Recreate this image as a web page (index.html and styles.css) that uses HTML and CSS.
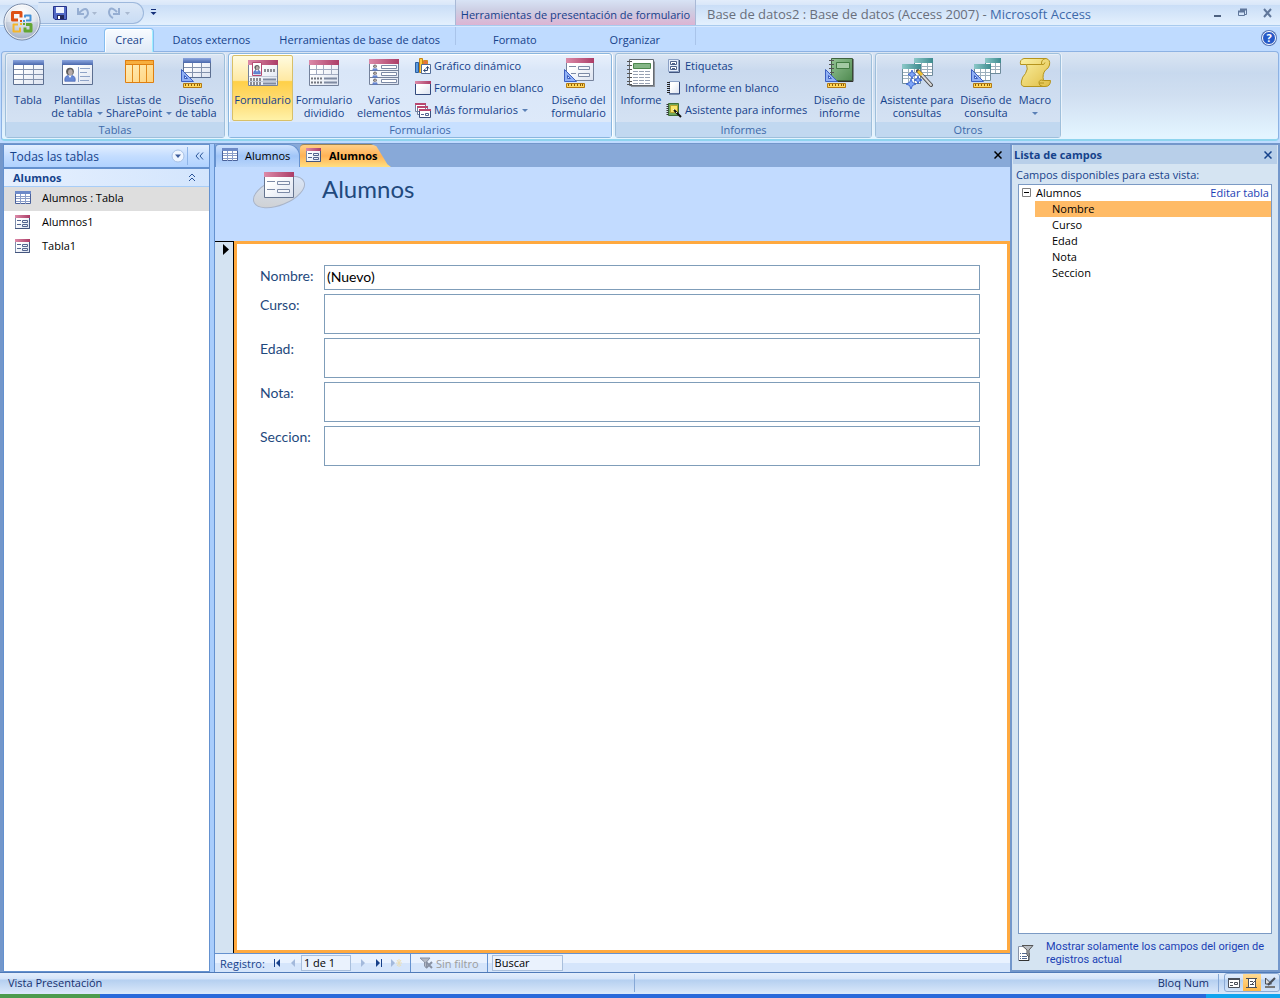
FILE: index.html
```html
<!DOCTYPE html>
<html lang="es">
<head>
    <meta charset="UTF-8">
    <meta name="viewport" content="width=device-width, initial-scale=1.0">
    <title>Base de datos2 - Microsoft Access</title>
    <link rel="stylesheet" href="styles.css">
</head>
<body>
    <!-- Shared icons -->
    <svg class="sprite" width="0" height="0" aria-hidden="true">
        <defs>
            <linearGradient id="gBlue" x1="0" y1="0" x2="0" y2="1"><stop offset="0" stop-color="#8ba6df"/><stop offset="1" stop-color="#4b68ac"/></linearGradient>
            <linearGradient id="gPaper" x1="0" y1="0" x2="1" y2="1"><stop offset="0.3" stop-color="#fff"/><stop offset="1" stop-color="#dbe2f0"/></linearGradient>
            <linearGradient id="gPink" x1="0" y1="0" x2="1" y2="0"><stop offset="0" stop-color="#dc8aa8"/><stop offset="1" stop-color="#ac3d67"/></linearGradient>
            <linearGradient id="gTeal" x1="0" y1="0" x2="1" y2="0"><stop offset="0" stop-color="#8cc8c8"/><stop offset="1" stop-color="#3d8b8f"/></linearGradient>
            <linearGradient id="gGreen" x1="0" y1="0" x2="1" y2="1"><stop offset="0" stop-color="#93c293"/><stop offset="1" stop-color="#4f8a50"/></linearGradient>
            <linearGradient id="gScroll" x1="0" y1="0" x2="1" y2="1"><stop offset="0" stop-color="#fbf2a4"/><stop offset="1" stop-color="#e0bd45"/></linearGradient>
            <linearGradient id="gList" x1="0" y1="0" x2="1" y2="1"><stop offset="0" stop-color="#fff0c0"/><stop offset="1" stop-color="#ffd27a"/></linearGradient>
            <radialGradient id="gOrb" cx="0.5" cy="0.25" r="0.8"><stop offset="0" stop-color="#fff"/><stop offset="0.5" stop-color="#e3e7ee"/><stop offset="1" stop-color="#93a3bd"/></radialGradient>
            <linearGradient id="gOval" x1="0" y1="1" x2="1" y2="0"><stop offset="0" stop-color="#cdcdcd"/><stop offset="1" stop-color="#dceaff"/></linearGradient>
        </defs>
        <symbol id="ruler" viewBox="0 0 32 32">
            <path d="M1.500 12.500V24.500H13.500Z" fill="#8fb0f4" stroke="#3d5fc0"/>
            <path d="M4.500 18.500V21.500H7.500Z" fill="#e6eeff" stroke="#3d5fc0"/>
            <path d="M3.500 26.500H21.500V30.500H3.500Z" fill="#ffd75c" stroke="#b37a12"/>
            <path d="M5.500 27v2M8.500 27v2M11.500 27v2M14.500 27v2M17.500 27v2M19.500 27v2" stroke="#8a5c08"/>
        </symbol>
        <symbol id="person" viewBox="0 0 14 18">
            <path d="M1 17q-1-6 4-7h4q5 1 4 7Z" fill="#6688d5" stroke="#3e5aa8" stroke-width="0.700"/>
            <path d="M5 10l2 3 2-3Z" fill="#fff"/>
            <circle cx="7" cy="5.500" r="4.500" fill="#5c5c5c"/>
            <ellipse cx="7.500" cy="6.500" rx="2.700" ry="3.500" fill="#b5aaa8"/>
        </symbol>
        <symbol id="table" viewBox="0 0 32 32">
            <path d="M1.500 3.500H31.500V27.500H1.500Z" fill="url(#gPaper)" stroke="#5c6f91"/>
            <path d="M1 3H32V8H1Z" fill="url(#gBlue)"/>
            <path d="M2 12.500H31M2 17.500H31M2 22.500H31M11.500 8V27M21.500 8V27" stroke="#8392ad"/>
        </symbol>
        <symbol id="template" viewBox="0 0 32 32">
            <path d="M1.500 3.500H31.500V27.500H1.500Z" fill="url(#gPaper)" stroke="#5c6f91"/>
            <path d="M1 3H32V8H1Z" fill="url(#gBlue)"/>
            <path d="M17.500 10V25M19 11.500H29M19 15.500H26M19 19.500H29M19 23.500H28" stroke="#8fa3c7"/>
            <use href="#person" x="3" y="9" width="12" height="17"/>
        </symbol>
        <symbol id="sharepoint" viewBox="0 0 32 32">
            <path d="M2.500 3.500H30.500V25.500H2.500Z" fill="url(#gList)" stroke="#df7f10"/>
            <path d="M2.500 3.500H30.500V7.500H2.500Z" fill="#f7ae3e" stroke="#df7f10"/>
            <path d="M9.500 8V25M16.500 8V25M23.500 8V25" stroke="#e08a1c"/>
        </symbol>
        <symbol id="tableDesign" viewBox="0 0 32 32">
            <path d="M3.500 1.500H30.500V20.500H3.500Z" fill="url(#gPaper)" stroke="#5c6f91"/>
            <path d="M3 1H31V6H3Z" fill="url(#gBlue)"/>
            <path d="M4 10.500H30M4 15.500H30M12.500 6V20M21.500 6V20" stroke="#8392ad"/>
            <use href="#ruler" width="32" height="32"/>
        </symbol>
        <symbol id="form" viewBox="0 0 32 32">
            <path d="M1.500 3.500H30.500V28.500H1.500Z" fill="url(#gPaper)" stroke="#75829b"/>
            <path d="M1 3H31V8H1Z" fill="url(#gPink)"/>
            <path d="M5.500 5.500H14.500V18.500H5.500Z" fill="#fff" stroke="#b54a72"/>
            <use href="#person" x="6" y="7" width="8" height="11"/>
            <path d="M17 13.500H28M3 22.500H14M3 26.500H14" stroke="#8b8d94" stroke-width="3" stroke-dasharray="2 1"/>
            <path d="M2 19.500H30M2 24.500H30" stroke="#c2cad8"/>
            <path d="M16 22.500H29M16 26.500H29" stroke="#7f8aa1" stroke-width="2"/>
        </symbol>
        <symbol id="split" viewBox="0 0 32 32">
            <path d="M1.500 3.500H30.500V28.500H1.500Z" fill="url(#gPaper)" stroke="#75829b"/>
            <path d="M1 3H31V8H1Z" fill="url(#gPink)"/>
            <path d="M2 12.500H30M2 17.500H30M8.500 8V17M15.500 8V17M23.500 8V17" stroke="#a2abc0"/>
            <path d="M3 21.500H14M3 25.500H14" stroke="#73767f" stroke-width="2" stroke-dasharray="2 1"/>
            <path d="M16 21.500H29M16 25.500H29" stroke="#7f8aa1" stroke-width="2"/>
        </symbol>
        <symbol id="multiple" viewBox="0 0 32 32">
            <path d="M1.500 2.500H30.500V27.500H1.500Z" fill="url(#gPaper)" stroke="#75829b"/>
            <path d="M1 2H31V7H1Z" fill="url(#gPink)"/>
            <path d="M2 13.500H30M2 20.500H30" stroke="#75829b"/>
            <path d="M13.500 8.500H28.500V11.500H13.500ZM13.500 15.500H28.500V18.500H13.500ZM13.500 22.500H28.500V25.500H13.500Z" fill="#fff" stroke="#7c8aa6"/>
            <use href="#person" x="4" y="7" width="6" height="7"/>
            <use href="#person" x="4" y="14" width="6" height="7"/>
            <use href="#person" x="4" y="21" width="6" height="7"/>
        </symbol>
        <symbol id="formPlain" viewBox="0 0 32 32">
            <path d="M1.500 3.500H30.500V28.500H1.500Z" fill="url(#gPaper)" stroke="#66758f"/>
            <path d="M1 3H31V8H1Z" fill="url(#gPink)"/>
            <path d="M14.500 12.500H26.500V15.500H14.500ZM14.500 20.500H26.500V23.500H14.500Z" fill="#f4f6fb" stroke="#7c8aa6"/>
            <path d="M4 12.500H12M4 20.500H12" stroke="#7c8aa6"/>
        </symbol>
        <symbol id="formDesign" viewBox="0 0 32 32">
            <path d="M3.500 1.500H30.500V23.500H3.500Z" fill="url(#gPaper)" stroke="#75829b"/>
            <path d="M3 1H31V6H3Z" fill="url(#gPink)"/>
            <path d="M15.500 9.500H26.500V12.500H15.500ZM15.500 16.500H26.500V19.500H15.500Z" fill="#f4f6fb" stroke="#7c8aa6"/>
            <path d="M6 9.500H13M8 16.500H13" stroke="#7c8aa6"/>
            <use href="#ruler" width="32" height="32"/>
        </symbol>
        <symbol id="report" viewBox="0 0 32 32">
            <path d="M6 4.500H30V30H6Z" fill="#8d9299"/>
            <path d="M4.500 2.500H28.500V28.500H4.500Z" fill="#fff" stroke="#646a73"/>
            <path d="M8.500 6.500H25.500V11.500H8.500Z" fill="#85b686" stroke="#4d874e"/>
            <path d="M8 14.500H26M8 17.500H26M8 20.500H26M8 23.500H26M8 26.500H26" stroke="#98a2b3" stroke-dasharray="5 1"/>
            <path d="M2 4.500H7M2 8.500H7M2 12.500H7M2 16.500H7M2 20.500H7M2 24.500H7M2 27.500H7" stroke="#555" stroke-width="1"/>
        </symbol>
        <symbol id="reportDesign" viewBox="0 0 32 32">
            <path d="M7.500 1.500H28.500V23.500H7.500Z" fill="url(#gGreen)" stroke="#40633f"/>
            <path d="M29 2V24.500H10" fill="none" stroke="#30302c"/>
            <path d="M12.500 5.500H25.500V11.500H12.500Z" fill="#a3c9a3" stroke="#417b42"/>
            <path d="M5 3.500H10M5 7.500H10M5 11.500H10M6 15.500H10" stroke="#555"/>
            <use href="#ruler" width="32" height="32"/>
        </symbol>
        <symbol id="queries" viewBox="0 0 32 32">
            <path d="M13.500 1.500H31.500V18.500H13.500Z" fill="#fff" stroke="#6e8b9b"/>
            <path d="M13 1H32V6H13Z" fill="url(#gTeal)"/>
            <path d="M14 9.500H31M14 12.500H31M14 15.500H31M20.500 6V18M26.500 6V18" stroke="#9db0bd"/>
            <path d="M1.500 7.500H19.500V26.500H1.500Z" fill="#fff" stroke="#6e8b9b"/>
            <path d="M1 7H20V12H1Z" fill="url(#gTeal)"/>
            <path d="M2 15.500H19M2 18.500H19M2 21.500H19M7.500 12V26M13.500 12V26" stroke="#9db0bd"/>
        </symbol>
        <symbol id="queryWizard" viewBox="0 0 32 32">
            <use href="#queries" width="32" height="32"/>
            <path d="M11 13l1.200 3L15 17.500l-2.800 1.500L11 22l-1.200-3L7 17.500l2.800-1.500ZM17 19l1 3 3 1-3 1-1 3-1-3-3-1 3-1ZM10 22l1.500 3.500L15 27l-3.500 1.500L10 32l-1.500-3.500L5 27l3.500-1.500Z" fill="#7fa6f7" stroke="#2b55c8" stroke-width="0.800"/>
            <path d="M17 14L30 28" stroke="#4c4c4c" stroke-width="4" stroke-linecap="round"/>
            <path d="M20 17L30 28" stroke="#d9d9d9" stroke-width="2" stroke-linecap="round"/>
            <path d="M17 14L21 18" stroke="#f2c230" stroke-width="3"/>
        </symbol>
        <symbol id="queryDesign" viewBox="0 0 32 32">
            <path d="M15.500 1.500H30.500V16.500H15.500Z" fill="#fff" stroke="#6e8b9b"/>
            <path d="M15 1H31V6H15Z" fill="url(#gTeal)"/>
            <path d="M16 9.500H30M16 12.500H30M20.500 6V16M25.500 6V16" stroke="#9db0bd"/>
            <path d="M4.500 7.500H20.500V23.500H4.500Z" fill="#fff" stroke="#6e8b9b"/>
            <path d="M4 7H21V12H4Z" fill="url(#gTeal)"/>
            <path d="M5 15.500H20M5 18.500H20M10.500 12V23M15.500 12V23" stroke="#9db0bd"/>
            <use href="#ruler" width="32" height="32"/>
        </symbol>
        <symbol id="macro" viewBox="0 0 32 32">
            <path d="M5 1.500H27Q31.500 2.500 30.500 8Q30 11 26.500 13Q23 17 24.500 23.500H31.500Q31.500 29.500 26 29.500H5Q1.500 29 2.500 24Q3 20 6.500 16.500Q9.500 12 7.500 7.500H1.500Q0.500 2.500 5 1.500Z" fill="url(#gScroll)" stroke="#b5941d"/>
            <path d="M7.500 7.500H22.500Q22 2 27 1.500M22.500 7.500Q25 8.500 26 5.500M24.500 23.500Q20 22 20 26Q20 29 24 29.500M20.500 26H25" fill="none" stroke="#b5941d"/>
        </symbol>
        <symbol id="pivot" viewBox="0 0 16 16">
            <path d="M0.500 4.500h3v10h-3Z" fill="#5a9ae0" stroke="#2b5e9f"/>
            <path d="M4.500 0.500h3v14h-3Z" fill="#ffcb3e" stroke="#c38414"/>
            <path d="M8.500 2.500h4v8h-4Z" fill="#e7703b" stroke="#d18a24"/>
            <path d="M6.500 6.500h9v9h-9Z" fill="#fff" stroke="#526c98"/>
            <path d="M9 12.500h3.500V9M11 10.500l1.500-2 1.500 2M10.500 11l-2 1.500 2 1.500" fill="none" stroke="#2d4675"/>
        </symbol>
        <symbol id="blank" viewBox="0 0 16 16">
            <path d="M0.500 1.500h15v13h-15Z" fill="url(#gPaper)" stroke="#324a7d"/>
            <path d="M0 1h16v3H0Z" fill="url(#gPink)"/>
        </symbol>
        <symbol id="moreForms" viewBox="0 0 16 16">
            <path d="M0.500 1.500h10v8h-10ZM2.500 4.500h10v8h-10Z" fill="#fff" stroke="#6f7f9f"/>
            <path d="M0 1h11v2H0ZM2 4h11v2H2Z" fill="#b9476f"/>
            <path d="M4.500 7.500h11v8h-11Z" fill="#fff" stroke="#3b4f7c"/>
            <path d="M4 7h12v2H4Z" fill="#b9476f"/>
            <path d="M6 12.500h3M10.500 11.500h3v2h-3Z" fill="none" stroke="#53658f"/>
        </symbol>
        <symbol id="labels" viewBox="0 0 16 16">
            <path d="M2.500 1.500h10v12h-10Z" fill="#e6eefb" stroke="#8ba0c4"/>
            <path d="M3 14.500h10.500V2" fill="none" stroke="#41557f"/>
            <path d="M4.500 3.500h6v3h-6ZM4.500 8.500h6v3h-6Z" fill="#fff" stroke="#4d6188"/>
            <path d="M6 5.500h3M6 10.500h3" stroke="#4d6188"/>
        </symbol>
        <symbol id="blankReport" viewBox="0 0 16 16">
            <path d="M3.500 1.500h10v12h-10Z" fill="url(#gPaper)" stroke="#8ba0c4"/>
            <path d="M3 14h10.500V2" fill="none" stroke="#2e4476"/>
            <path d="M2.500 2v12" stroke="#222" stroke-width="3" stroke-dasharray="1 1"/>
        </symbol>
        <symbol id="reportWizard" viewBox="0 0 16 16">
            <path d="M2.500 1.500h10v12h-10Z" fill="#6fa65a" stroke="#3f6e36"/>
            <path d="M4.500 3.500h7v7h-7Z" fill="#f9e66b" stroke="#b9a32a"/>
            <path d="M1.500 2v12" stroke="#333" stroke-width="2" stroke-dasharray="1 1"/>
            <path d="M8 8l7 7" stroke="#111" stroke-width="2"/>
            <path d="M7 7l1 1M10 10l1 1" stroke="#eee"/>
        </symbol>
        <symbol id="tableSm" viewBox="0 0 16 14">
            <path d="M0.500 0.500h15v12h-15Z" fill="#fff" stroke="#4a629b"/>
            <path d="M0 0h16v3H0Z" fill="#6d8ac8"/>
            <path d="M1 5.500h14M1 7.500h14M1 10.500h14M5.500 3v10M10.500 3v10" stroke="#8a9dc8"/>
        </symbol>
        <symbol id="formSm" viewBox="0 0 16 14">
            <path d="M0.500 0.500h14v13h-14Z" fill="url(#gPaper)" stroke="#7f8eac"/>
            <path d="M14.500 3v10.500H0" fill="none" stroke="#44567e"/>
            <path d="M0 0h15v3H0Z" fill="url(#gPink)"/>
            <path d="M2 5.500h4M2 9.500h4M7.500 5.500h5v2h-5ZM7.500 9.500h5v2h-5Z" fill="none" stroke="#53658f"/>
        </symbol>
    </svg>

    <div class="app">
        <header class="titlebar">
            <div class="quick-access">
                <button class="office" aria-label="Botón de Office">
                    <svg width="40" height="40" viewBox="0 0 40 40">
                        <circle cx="20" cy="20" r="18" fill="url(#gOrb)" stroke="#6f819f"/>
                        <path d="M3 20a17 17 0 0 0 34 0Z" fill="#a9b6cb" fill-opacity="0.300"/>
                        <circle cx="20" cy="20" r="17" fill="none" stroke="#fff" stroke-opacity="0.800"/>
                        <g fill="none" stroke-linejoin="round">
                            <path d="M16 18h-5.500V10.500h8.500v5" stroke="#dd4f14" stroke-width="3"/>
                            <path d="M24 18.500h4.500v-5h-5.500v2" stroke="#4592d8" stroke-width="2"/>
                            <path d="M16 22.500h-4.500v7h6.500v-4" stroke="#f5b62a" stroke-width="2"/>
                            <path d="M24 22.500h5v6.500h-6v-3.500" stroke="#63a632" stroke-width="3"/>
                        </g>
                        <path d="M18 18h2v2h-2Z" fill="#dd4f14"/>
                        <path d="M21 18h2v2h-2Z" fill="#4592d8"/>
                        <path d="M18 21h2v2h-2Z" fill="#f5b62a"/>
                        <path d="M21 21h2v2h-2Z" fill="#63a632"/>
                    </svg>
                </button>
                <div class="qat">
                    <button aria-label="Guardar"><svg width="14" height="14" viewBox="0 0 14 14"><path d="M0.500 0.500H13.500V13.500H2L0.500 12Z" fill="#5269c6" stroke="#27348a"/><path d="M3 1h8v6H3Z" fill="#eef3ff"/><path d="M4 9h7v4H4Z" fill="#23285a"/><path d="M5 10h2v3H5Z" fill="#fff"/></svg></button>
                    <button aria-label="Deshacer"><svg width="22" height="14" viewBox="0 0 22 14"><path d="M3 7q8-8 9 0 0 3-4 5M2 2v6h6" fill="none" stroke="#96aed2" stroke-width="2"/><path d="M16 6h5l-2.500 3Z" fill="#a9b9d0"/></svg></button>
                    <button aria-label="Rehacer"><svg width="24" height="14" viewBox="0 0 24 14"><path d="M10 6q-7-7-8 0 0 4 4 6M12 2v6H6" fill="none" stroke="#96aed2" stroke-width="2"/><path d="M18 6h5l-2.500 3Z" fill="#a9b9d0"/></svg></button>
                </div>
                <button class="qat-more" aria-label="Personalizar"><svg width="7" height="8" viewBox="0 0 7 8"><path d="M1 1.500h5" stroke="#15307a"/><path d="M0.500 4h6l-3 3Z" fill="#15307a"/></svg></button>
            </div>
            <div class="context-title">Herramientas de presentación de formulario</div>
            <h1 class="app-title">Base de datos2 : Base de datos (Access 2007) - <span>Microsoft Access</span></h1>
            <div class="window-buttons">
                <button aria-label="Minimizar"><svg width="10" height="10" viewBox="0 0 10 10"><path d="M1 8h7" stroke="#4d6180" stroke-width="2"/></svg></button>
                <button aria-label="Restaurar"><svg width="10" height="10" viewBox="0 0 10 10"><path d="M2.500 3V1.500h6v5H7M0.500 3.500h6v4h-6Z" fill="none" stroke="#60779b"/><path d="M0 3.500h7M2 1.500h7" stroke="#60779b" stroke-width="2"/></svg></button>
                <button aria-label="Cerrar"><svg width="10" height="10" viewBox="0 0 10 10"><path d="M1 1l7 8M8 1L1 9" stroke="#60779b" stroke-width="2"/></svg></button>
            </div>
        </header>

        <nav class="ribbon-tabs">
            <div class="main-tabs">
                <button class="tab">Inicio</button>
                <button class="tab active">Crear</button>
                <button class="tab">Datos externos</button>
                <button class="tab">Herramientas de base de datos</button>
            </div>
            <div class="context-tabs">
                <button class="tab">Formato</button>
                <button class="tab">Organizar</button>
            </div>
            <button class="help" aria-label="Ayuda">?</button>
        </nav>

        <section class="ribbon">
            <div class="group">
                <div class="group-body tables-body">
                    <button class="big"><svg><use href="#table"/></svg>Tabla</button>
                    <button class="big"><svg><use href="#template"/></svg>Plantillas<span class="more">de tabla</span></button>
                    <button class="big"><svg><use href="#sharepoint"/></svg>Listas de<span class="more">SharePoint</span></button>
                    <button class="big"><svg><use href="#tableDesign"/></svg>Diseño<br>de tabla</button>
                </div>
                <h2>Tablas</h2>
            </div>
            <div class="group hover">
                <div class="group-body forms-body">
                    <button class="big lit"><svg><use href="#form"/></svg>Formulario</button>
                    <button class="big"><svg><use href="#split"/></svg>Formulario<br>dividido</button>
                    <button class="big"><svg><use href="#multiple"/></svg>Varios<br>elementos</button>
                    <div class="small-list">
                        <button class="small"><svg><use href="#pivot"/></svg>Gráfico dinámico</button>
                        <button class="small"><svg><use href="#blank"/></svg>Formulario en blanco</button>
                        <button class="small"><svg><use href="#moreForms"/></svg><span class="more">Más formularios</span></button>
                    </div>
                    <button class="big"><svg><use href="#formDesign"/></svg>Diseño del<br>formulario</button>
                </div>
                <h2>Formularios</h2>
            </div>
            <div class="group">
                <div class="group-body reports-body">
                    <button class="big"><svg><use href="#report"/></svg>Informe</button>
                    <div class="small-list">
                        <button class="small"><svg><use href="#labels"/></svg>Etiquetas</button>
                        <button class="small"><svg><use href="#blankReport"/></svg>Informe en blanco</button>
                        <button class="small"><svg><use href="#reportWizard"/></svg>Asistente para informes</button>
                    </div>
                    <button class="big"><svg><use href="#reportDesign"/></svg>Diseño de<br>informe</button>
                </div>
                <h2>Informes</h2>
            </div>
            <div class="group">
                <div class="group-body other-body">
                    <button class="big"><svg><use href="#queryWizard"/></svg>Asistente para<br>consultas</button>
                    <button class="big"><svg><use href="#queryDesign"/></svg>Diseño de<br>consulta</button>
                    <button class="big"><svg><use href="#macro"/></svg>Macro<span class="more alone"></span></button>
                </div>
                <h2>Otros</h2>
            </div>
        </section>

        <main class="workspace">
            <aside class="nav-pane">
                <div class="nav-header">
                    <span>Todas las tablas</span>
                    <button class="nav-filter" aria-label="Elegir categoría"><svg width="14" height="14" viewBox="0 0 14 14"><circle cx="7" cy="7" r="6" fill="#eef5ff" stroke="#a9c2e6"/><path d="M4 5.500h6l-3 3.500Z" fill="#3c5c9c"/></svg></button>
                    <button class="nav-collapse" aria-label="Contraer"><svg width="9" height="8" viewBox="0 0 9 8"><path d="M4 0.500L1 4l3 3.500M8 0.500L5 4l3 3.500" fill="none" stroke="#2c5599"/></svg></button>
                </div>
                <button class="nav-group">Alumnos<svg width="8" height="9" viewBox="0 0 8 9"><path d="M1 4l3-3 3 3M1 8l3-3 3 3" fill="none" stroke="#2c5599"/></svg></button>
                <ul class="nav-list">
                    <li class="selected"><svg><use href="#tableSm"/></svg>Alumnos : Tabla</li>
                    <li><svg><use href="#formSm"/></svg>Alumnos1</li>
                    <li><svg><use href="#formSm"/></svg>Tabla1</li>
                </ul>
            </aside>

            <section class="document">
                <div class="doc-tabs">
                    <button class="doc-tab"><svg><use href="#tableSm"/></svg>Alumnos</button>
                    <button class="doc-tab current"><svg><use href="#formSm"/></svg>Alumnos</button>
                    <button class="doc-close" aria-label="Cerrar documento"><svg width="8" height="8" viewBox="0 0 8 8"><path d="M0.500 0.500l7 7M7.500 0.500l-7 7" stroke="#000" stroke-width="1.500"/></svg></button>
                </div>
                <div class="form-header">
                    <svg width="54" height="38" viewBox="0 0 54 38">
                        <ellipse cx="27" cy="21" rx="27" ry="13" transform="rotate(-22 27 21)" fill="url(#gOval)" stroke="#a9b4c8"/>
                        <use href="#formPlain" x="11" y="-2" width="32" height="32"/>
                    </svg>
                    <h2>Alumnos</h2>
                </div>
                <div class="form-body">
                    <div class="selector"><svg width="6" height="11" viewBox="0 0 6 11"><path d="M0 0l6 5.500L0 11Z"/></svg></div>
                    <form class="record">
                        <label for="nombre">Nombre:</label>
                        <input id="nombre" type="text" value="(Nuevo)">
                        <label for="curso">Curso:</label>
                        <textarea id="curso"></textarea>
                        <label for="edad">Edad:</label>
                        <textarea id="edad"></textarea>
                        <label for="nota">Nota:</label>
                        <textarea id="nota"></textarea>
                        <label for="seccion">Seccion:</label>
                        <textarea id="seccion"></textarea>
                    </form>
                </div>
                <div class="record-nav">
                    <label for="registro">Registro:</label>
                    <button aria-label="Primero"><svg width="8" height="8" viewBox="0 0 8 8"><path d="M1.500 0v8" stroke="#17408a"/><path d="M7 0v8L3 4Z" fill="#17408a"/></svg></button>
                    <button aria-label="Anterior"><svg width="8" height="8" viewBox="0 0 8 8"><path d="M6 0v8L2 4Z" fill="#a3b9dc"/></svg></button>
                    <input id="registro" type="text" value="1 de 1">
                    <button aria-label="Siguiente"><svg width="8" height="8" viewBox="0 0 8 8"><path d="M2 0v8l4-4Z" fill="#a3b9dc"/></svg></button>
                    <button aria-label="Último"><svg width="8" height="8" viewBox="0 0 8 8"><path d="M6.500 0v8" stroke="#17408a"/><path d="M1 0v8l4-4Z" fill="#17408a"/></svg></button>
                    <button aria-label="Nuevo"><svg width="11" height="8" viewBox="0 0 11 8"><path d="M0 0v8l4-4Z" fill="#a3b9dc"/><path d="M8 0v8M5 4h6M6 1l4 6M10 1L6 7" stroke="#eadfb8"/></svg></button>
                    <button class="filter" disabled><svg width="14" height="12" viewBox="0 0 14 12"><path d="M1 1h10L7.500 5v6l-2-2V5Z" fill="#b5bac5" stroke="#8790a2"/><path d="M7 5l6 6M13 5l-6 6" stroke="#8790a2" stroke-width="2"/></svg>Sin filtro</button>
                    <input class="search" type="text" value="Buscar" aria-label="Buscar">
                </div>
            </section>

            <aside class="fields">
                <div class="fields-title">
                    <h2>Lista de campos</h2>
                    <button aria-label="Cerrar panel"><svg width="8" height="8" viewBox="0 0 8 8"><path d="M0.500 0.500l7 7M7.500 0.500l-7 7" stroke="#15428b" stroke-width="1.500"/></svg></button>
                </div>
                <p>Campos disponibles para esta vista:</p>
                <div class="field-tree">
                    <div class="tree-root">
                        <button aria-label="Contraer Alumnos"><svg width="9" height="9" viewBox="0 0 9 9"><path d="M0.500 0.500h8v8h-8Z" fill="#fff" stroke="#808080"/><path d="M2 4.500h5" stroke="#000"/></svg></button>
                        Alumnos
                        <a href="#">Editar tabla</a>
                    </div>
                    <ul>
                        <li class="picked">Nombre</li>
                        <li>Curso</li>
                        <li>Edad</li>
                        <li>Nota</li>
                        <li>Seccion</li>
                    </ul>
                </div>
                <div class="fields-footer">
                    <svg width="16" height="18" viewBox="0 0 16 18"><path d="M0.500 2.500h10v14h-10Z" fill="#fff" stroke="#8793a8"/><path d="M1 16.500h10V9" fill="none" stroke="#333"/><path d="M2 9.500h1M4 9.500h5M2 12.500h1M4 12.500h5M2 14.500h1M4 14.500h5" stroke="#52688f"/><path d="M4 1.500h11L11 6v7l-2-2V6Z" fill="#b9bdc3" stroke="#555"/></svg>
                    <a href="#">Mostrar solamente los campos del origen de registros actual</a>
                </div>
            </aside>
        </main>

        <footer class="statusbar">
            <span class="view-name">Vista Presentación</span>
            <span class="num-lock">Bloq Num</span>
            <div class="views">
                <button aria-label="Vista Formulario"><svg width="12" height="12" viewBox="0 0 12 12"><path d="M0.500 1.500h11v9h-11Z" fill="#fff" stroke="#4a4f59"/><path d="M0 2h12" stroke="#4a4f59" stroke-width="2"/><path d="M2 5.500h3M2 8.500h3M6.500 5.500h3v2h-3Z" fill="none" stroke="#4a4f59"/></svg></button>
                <button class="on" aria-label="Vista Presentación"><svg width="12" height="12" viewBox="0 0 12 12"><path d="M2.500 1.500h7v9h-7Z" fill="#fff" stroke="#4a4f59"/><path d="M0 1.500h11M0 10.500h11M4 4.500h3M4 7.500h4" stroke="#4a4f59"/><path d="M6 7l3-3" stroke="#4a4f59"/></svg></button>
                <button aria-label="Vista Diseño"><svg width="12" height="12" viewBox="0 0 12 12"><path d="M1.500 1v6h6Z" fill="#ddd" stroke="#4a4f59"/><path d="M11 1L4 8" stroke="#4a4f59" stroke-width="2"/><path d="M1 10h10" stroke="#777" stroke-width="2"/></svg></button>
            </div>
        </footer>
        <div class="taskbar"></div>
    </div>
</body>
</html>
```

FILE: styles.css
```css
* {
    box-sizing: border-box;
}

body {
    margin: 0;
    font-family: "Open Sans", "Noto Sans", sans-serif;
    font-size: 11px;
    line-height: 13px;
    color: #15428b;
}

button,
input,
textarea {
    font: inherit;
    color: inherit;
    margin: 0;
}

button {
    padding: 0;
    border: 0;
    background: none;
    white-space: nowrap;
}

svg {
    display: block;
    flex: none;
}

h1,
h2,
p,
ul {
    margin: 0;
    padding: 0;
    font-size: 11px;
    font-weight: normal;
    list-style: none;
}

a {
    color: #1a3fb5;
    text-decoration: none;
}

.sprite {
    position: absolute;
}

.app {
    display: flex;
    flex-direction: column;
    min-height: 100vh;
    background: #bfdbff;
}

/* Title bar */
.titlebar {
    display: flex;
    align-items: stretch;
    height: 26px;
    background: linear-gradient(#e3edfb, #d9e7f9 20%, #cadef7 21%, #e2effd 95%);
    border-bottom: 1px solid #a9cbee;
}

.quick-access {
    display: flex;
    align-items: flex-start;
    flex: 0 0 455px;
    position: relative;
}

.office {
    position: absolute;
    left: 2px;
    top: 2px;
    z-index: 2;
}

.qat {
    display: flex;
    align-items: center;
    gap: 9px;
    width: 106px;
    height: 22px;
    margin: 2px 0 0 38px;
    padding-left: 14px;
    border: 1px solid #9db8dc;
    border-left-color: transparent;
    border-radius: 0 11px 11px 0;
    background: linear-gradient(#dce8f7, #c9dcf4);
}

.qat-more {
    margin: 8px 0 0 6px;
}

.context-title {
    flex: 0 0 241px;
    padding-top: 8px;
    text-align: center;
    white-space: nowrap;
    border-left: 1px solid #a9b9d6;
    border-right: 1px solid #a9b9d6;
    background: linear-gradient(#d8e3f5, #cdcfe4 40%, #dcb4d3);
}

.app-title {
    flex: 1;
    padding: 5px 0 0 11px;
    font-size: 13px;
    line-height: 18px;
    color: #696f7c;
    white-space: nowrap;
}

.app-title span {
    color: #3e6aaa;
}

.window-buttons {
    display: flex;
    gap: 15px;
    padding: 8px 7px 0 0;
    align-items: flex-start;
}

/* Ribbon tabs */
.ribbon-tabs {
    display: flex;
    height: 25px;
    background: #bfdbff;
    border-top: 1px solid #d8e9ff;
}

.main-tabs {
    display: flex;
    flex: 0 0 455px;
    padding-left: 46px;
}

.tab {
    height: 24px;
    padding: 0 14px;
}

.main-tabs .tab {
    margin-right: 1px;
}

.main-tabs .active {
    position: relative;
    margin: 1px 4px 0 2px;
    padding: 0 10px 2px;
    border: 1px solid #85bdf0;
    border-bottom: 0;
    border-radius: 4px 4px 0 0;
    background: linear-gradient(#f8fbff, #dfeaf7);
    box-shadow: inset 1px 1px #fff, inset -1px 0 #9ff0ff;
}

.context-tabs {
    display: flex;
    justify-content: space-between;
    flex: 0 0 241px;
    height: 18px;
    padding: 0 21px 0 23px;
    border-left: 1px solid #a9c4ea;
    border-right: 1px solid #a9c4ea;
}

.help {
    width: 14px;
    height: 14px;
    margin: 4px 4px 0 auto;
    border: 1px solid #fff;
    border-radius: 50%;
    background: #2659c8;
    box-shadow: 0 0 0 1px #5876b6;
    color: #fff;
    font-weight: bold;
    line-height: 12px;
}

/* Ribbon */
.ribbon {
    display: flex;
    align-items: flex-start;
    gap: 3px;
    height: 90px;
    margin: 0 1px 2px;
    padding: 1px 3px;
    border: 1px solid #8db2e3;
    border-bottom: 2px solid #8ed4ee;
    border-radius: 4px;
    background: linear-gradient(#dae5f3, #c8d9ee 24%, #d0dff1 50%, #e3f4ff 96%);
}

.group {
    flex: none;
    border: 1px solid #9ebfdb;
    border-radius: 3px;
    background: linear-gradient(#dce6f3, #c9d9ee 20%, #d7e4f4);
    box-shadow: inset 1px 1px #e7eff8, 1px 0 #ebf3fb;
}

.group.hover {
    border-color: #8ab6de;
    background: linear-gradient(#e9f1fc, #d9e6f8 20%, #deeafa);
    box-shadow: inset 1px 1px #fff, 1px 0 #fff;
}

.group h2 {
    height: 15px;
    line-height: 15px;
    text-align: center;
    color: #3e6aaa;
    background: #c1d8f0;
}

.group.hover h2 {
    background: #c8e0ff;
}

.group-body {
    display: grid;
    gap: 2px;
    height: 68px;
    padding: 1px 2px 0;
}

.tables-body {
    grid-template-columns: 40px 54px 66px 44px;
    padding-right: 6px;
}

.forms-body {
    grid-template-columns: 61px 58px 58px 132px 59px;
    padding-left: 3px;
    padding-right: 3px;
}

.reports-body {
    grid-template-columns: 46px 142px 59px;
}

.other-body {
    grid-template-columns: 78px 56px 38px;
    padding-right: 6px;
}

.big {
    display: flex;
    flex-direction: column;
    align-items: center;
    height: 66px;
    padding-top: 2px;
    text-align: center;
}

.big svg {
    width: 32px;
    height: 32px;
    margin-bottom: 4px;
}

.big.lit {
    border: 1px solid #d8c068;
    border-radius: 2px;
    padding-top: 1px;
    background: linear-gradient(#fffbe0, #ffe9a3 38%, #ffd048 40%, #ffdc74 70%, #fff2a8);
}

.more::after {
    content: "";
    display: inline-block;
    margin-left: 4px;
    vertical-align: 2px;
    border: 3px solid transparent;
    border-top-color: #5a80b6;
    border-bottom: 0;
}

.more.alone::after {
    margin-left: 0;
}

.small-list {
    display: flex;
    flex-direction: column;
}

.small {
    display: flex;
    align-items: center;
    gap: 3px;
    height: 22px;
    padding-bottom: 1px;
}

.small svg {
    width: 16px;
    height: 16px;
}

/* Workspace */
.workspace {
    display: flex;
    flex: 1;
    padding: 1px 1px 0 3px;
    background: #7397cb;
}

.nav-pane {
    display: flex;
    flex-direction: column;
    flex: 0 0 207px;
    border: 1px solid #6491cf;
    background: #fff;
}

.nav-header {
    display: flex;
    align-items: center;
    height: 24px;
    padding: 0 5px 0 6px;
    font-size: 12px;
    background: linear-gradient(#e3efff, #c4ddff 50%, #b0d2ff);
    border-bottom: 2px solid #6491cf;
}

.nav-filter {
    margin-left: auto;
}

.nav-collapse {
    height: 18px;
    margin-left: 2px;
    padding-left: 7px;
    border-left: 1px solid #8fb5e8;
}

.nav-group {
    display: flex;
    justify-content: space-between;
    align-items: center;
    height: 18px;
    padding: 0 13px 0 9px;
    font-weight: bold;
    background: linear-gradient(90deg, #e6f0fe, #d3e5fd);
    border-bottom: 1px solid #a7cdf8;
}

.nav-list li {
    display: flex;
    align-items: center;
    gap: 11px;
    height: 24px;
    padding: 0 0 3px 11px;
    color: #000;
}

.nav-list svg,
.doc-tab svg {
    width: 16px;
    height: 14px;
}

.nav-list .selected {
    background: #dedede;
}

.document {
    display: flex;
    flex-direction: column;
    flex: 1;
    min-width: 0;
    border-left: 4px solid #a9cdfc;
    box-shadow: inset 1px 0 #6491cf;
    padding-left: 1px;
}

.doc-tabs {
    display: flex;
    height: 23px;
    background: #88a9d8;
}

.doc-tab {
    display: flex;
    align-items: center;
    gap: 7px;
    width: 85px;
    padding: 0 0 2px 6px;
    color: #000;
    border: 1px solid #6792ce;
    border-bottom: 0;
    border-radius: 4px 12px 0 0;
    background: linear-gradient(#cfe2fd, #a0c5f8 50%, #b9d5fb);
}

.doc-tab.current {
    width: 91px;
    font-weight: bold;
    border: 0;
    border-top: 1px solid #9a8354;
    border-radius: 4px 0 0 0;
    background: linear-gradient(#ffcf86, #ffb256 50%, #ffdf80);
    clip-path: polygon(0 0, 78% 0, 84% 10%, 96% 88%, 100% 100%, 0 100%);
}

.doc-close {
    margin: 0 8px 2px auto;
}

.form-header {
    display: flex;
    align-items: flex-start;
    height: 74px;
    padding: 4px 0 0 37px;
    gap: 16px;
    background: #c2dbff;
}

.form-header h2 {
    font-family: Lato, "Open Sans", sans-serif;
    font-size: 24px;
    line-height: 36px;
    color: #1f497d;
}

.form-body {
    display: flex;
    flex: 1;
}

.selector {
    flex: 0 0 19px;
    padding: 2px 0 0 8px;
    background: #d4e3f2;
    border-top: 1px solid #000;
    border-right: 1px solid #000;
}

.record {
    display: grid;
    flex: 1;
    grid-template-columns: 60px 1fr;
    grid-auto-rows: min-content;
    gap: 4px;
    padding: 21px 27px 0 23px;
    background: #fff;
    border: 3px solid #ffa93f;
    font-family: Lato, "Open Sans", sans-serif;
    font-size: 14px;
    line-height: 22px;
    color: #1f497d;
}

.record input,
.record textarea {
    display: block;
    width: 100%;
    padding: 0 3px;
    border: 1px solid #7f9db9;
    border-radius: 0;
    background: #fff;
    color: #000;
    resize: none;
}

.record input {
    height: 25px;
    padding: 0 2px 3px;
}

.record textarea {
    height: 40px;
}

.record-nav {
    display: flex;
    align-items: center;
    gap: 8px;
    height: 19px;
    padding-left: 5px;
    background: linear-gradient(#e9f2ff 50%, #d5e5fb 50%);
    border-top: 1px solid #6491cf;
}

.record-nav input {
    width: 50px;
    height: 16px;
    padding: 0 2px 1px;
    margin-left: -4px;
    border: 1px solid #a9bfdc;
    background: #eaf2fd;
    color: #000;
}

.record-nav .search {
    width: 71px;
}

.filter {
    display: flex;
    align-items: center;
    gap: 3px;
    height: 18px;
    padding: 0 8px;
    color: #9c9c9c;
    border: 1px solid #6491cf;
    border-width: 0 1px;
}

/* Field list */
.fields {
    display: flex;
    flex-direction: column;
    flex: 0 0 268px;
    margin-left: 1px;
    padding: 0 6px;
    border: 1px solid #7397cb;
    border-bottom-width: 2px;
    background: #d5e4f2;
}

.fields-title {
    display: flex;
    align-items: center;
    justify-content: space-between;
    height: 19px;
    margin: 0 -5px;
    padding: 0 5px 0 1px;
    background: #b8cfe9;
}

.fields-title h2 {
    font-weight: bold;
}

.fields p {
    padding: 4px 0 3px;
    margin-left: -2px;
}

.field-tree {
    flex: 1;
    border: 1px solid #7b9ac4;
    background: #fff;
    color: #000;
}

.tree-root {
    display: flex;
    align-items: center;
    gap: 5px;
    height: 16px;
    padding: 0 2px 1px 3px;
}

.tree-root a {
    margin-left: auto;
}

.field-tree li {
    height: 16px;
    line-height: 16px;
    margin-left: 16px;
    padding-left: 17px;
}

.field-tree .picked {
    background: #ffbb66;
}

.fields-footer {
    display: flex;
    align-items: center;
    gap: 12px;
    height: 36px;
    padding-top: 2px;
}

.fields-footer a {
    font-family: Roboto, "Open Sans", sans-serif;
}

/* Status bar */
.statusbar {
    display: flex;
    align-items: center;
    height: 22px;
    padding: 0 0 2px 8px;
    color: #15306f;
    background: linear-gradient(#e3eefc, #d3e3f9 30%, #b4cff0 32%, #dce9fa);
    border-top: 1px solid #4f7ab8;
}

.view-name {
    flex: 12;
}

.num-lock {
    display: flex;
    flex: 11;
    align-items: center;
    justify-content: flex-end;
    height: 18px;
    padding-right: 9px;
    border: 1px solid #86a8d6;
    border-width: 0 1px;
}

.views {
    display: flex;
    margin-left: 5px;
    border: 1px solid #8aa9d4;
    border-radius: 3px;
}

.views button {
    display: flex;
    align-items: center;
    justify-content: center;
    width: 18px;
    height: 17px;
}

.views .on {
    background: linear-gradient(#ffdb94, #ffb848);
}

.taskbar {
    height: 4px;
    background: linear-gradient(90deg, #4c9b4c 100px, #2a69da 100px, #2a69da calc(100% - 74px), #12a4ee calc(100% - 74px));
}
```
